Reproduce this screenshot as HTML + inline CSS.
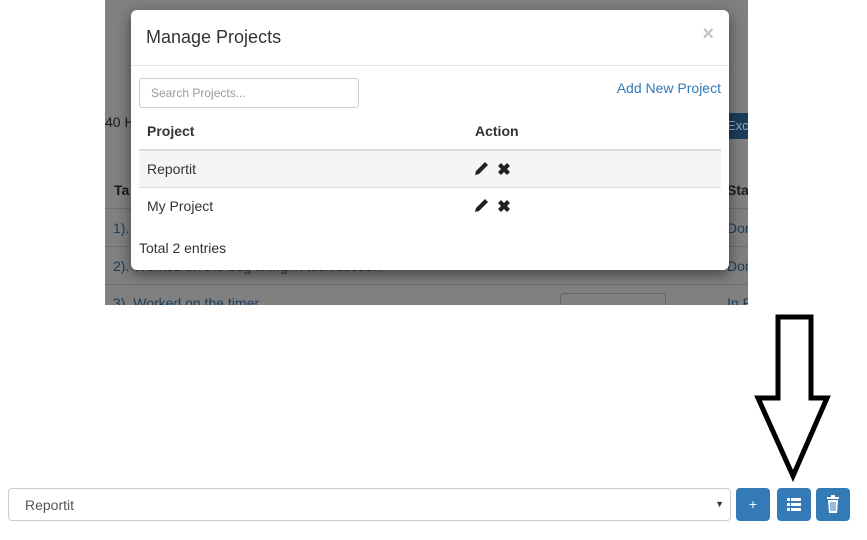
<!DOCTYPE html>
<html><head><style>
body{margin:0;width:867px;height:540px;background:#fff;position:relative;overflow:hidden;font-family:"Liberation Sans",sans-serif;color:#333;font-size:14px}
.bg{position:absolute;left:105px;top:0;width:643px;height:305px;background:#808080;overflow:hidden}
.t{position:absolute;font-size:14px;color:#1a1a1a;white-space:nowrap}
.hl{position:absolute;left:0;width:643px;height:1px;background:#6e6e6e}
.modal{position:absolute;left:131px;top:10px;width:598px;height:260px;background:#fff;border-radius:6px;box-shadow:0 4px 14px rgba(0,0,0,.5)}
.btn{position:absolute;top:488px;width:34px;height:33px;background:#337ab7;border-radius:4px;color:#fff;text-align:center}
</style></head><body>
<div class="bg">
 <div class="t" style="left:0;top:114px;color:#1a1a1a">40 H</div>
 <div style="position:absolute;left:616px;top:113px;width:30px;height:26px;background:#1b3d5c;color:#9ab;font-size:13px;line-height:26px;padding-left:6px">Exce</div>
 <div class="t" style="left:9px;top:182px;font-weight:bold">Ta</div>
 <div class="t" style="left:622px;top:182px;font-weight:bold">Sta</div>
 <div class="hl" style="top:208px"></div>
 <div class="t" style="left:8px;top:220px;color:#1a3d5b">1).</div>
 <div class="t" style="left:622px;top:220px;color:#1a3d5b">Don</div>
 <div class="hl" style="top:246px"></div>
 <div class="t" style="left:8px;top:258px;color:#1a3d5b">2). Worked on the bug fixing in task section</div>
 <div class="t" style="left:622px;top:258px;color:#1a3d5b">Don</div>
 <div class="hl" style="top:284px"></div>
 <div class="t" style="left:8px;top:295px;color:#1a3d5b">3). Worked on the timer</div>
 <div style="position:absolute;left:455px;top:293px;width:104px;height:20px;border:1px solid #666;border-radius:3px;background:#808080"></div>
 <div class="t" style="left:622px;top:295px;color:#1a3d5b">In P</div>
</div>
<div class="modal">
 <div style="position:absolute;left:15px;top:17px;font-size:18px;color:#333">Manage Projects</div>
 <div style="position:absolute;right:15px;top:13px;font-size:20px;color:#c4c4c4;font-weight:bold">×</div>
 <div style="position:absolute;left:0;top:55px;width:598px;height:1px;background:#e5e5e5"></div>
 <div style="position:absolute;left:8px;top:68px;height:28px;border:1px solid #ccc;border-radius:3px;font-size:12px;color:#999;line-height:28px;padding-left:11px;width:207px">Search Projects...</div>
 <div style="position:absolute;right:8px;top:70px;color:#337ab7;font-size:14px">Add New Project</div>
 <div style="position:absolute;left:16px;top:113px;font-weight:bold">Project</div>
 <div style="position:absolute;left:344px;top:113px;font-weight:bold">Action</div>
 <div style="position:absolute;left:8px;top:139px;width:582px;height:2px;background:#ddd"></div>
 <div style="position:absolute;left:8px;top:141px;width:582px;height:36px;background:#f5f5f5;border-bottom:1px solid #ddd"></div>
 <div style="position:absolute;left:16px;top:151px">Reportit</div>
 <div style="position:absolute;left:16px;top:188px">My Project</div>
 <svg style="position:absolute;left:343px;top:150px" width="40" height="60" viewBox="0 0 40 60">
  <g fill="#222"><path d="M1 15 L2 11 L11 2 L14 5 L5 14 Z"/><path d="M27 3 L30 6 L33 3 L36 6 L33 9 L36 12 L33 15 L30 12 L27 15 L24 12 L27 9 L24 6 Z"/>
  <g transform="translate(0,37)"><path d="M1 15 L2 11 L11 2 L14 5 L5 14 Z"/><path d="M27 3 L30 6 L33 3 L36 6 L33 9 L36 12 L33 15 L30 12 L27 15 L24 12 L27 9 L24 6 Z"/></g></g>
 </svg>
 <div style="position:absolute;left:8px;top:230px">Total 2 entries</div>
</div>
<svg style="position:absolute;left:0;top:0" width="867" height="540">
 <path d="M778 317 L811 317 L811 398 L827 398 L793 476 L758 398 L778 398 Z" fill="#fff" stroke="#000" stroke-width="5" stroke-linejoin="miter"/>
</svg>
<div style="position:absolute;left:8px;top:488px;width:721px;height:31px;border:1px solid #ccc;border-radius:4px;background:#fff">
 <div style="position:absolute;left:16px;top:8px;color:#555">Reportit</div>
 <div style="position:absolute;right:6px;top:10px;font-size:9px;color:#333">▼</div>
</div>
<div class="btn" style="left:736px;line-height:33px;font-size:14px">+</div>
<div class="btn" style="left:777px">
 <svg width="34" height="33"><g fill="#fff"><rect x="10" y="10" width="3" height="3"/><rect x="14" y="10" width="10" height="3"/><rect x="10" y="15" width="3" height="3"/><rect x="14" y="15" width="10" height="3"/><rect x="10" y="20" width="3" height="3"/><rect x="14" y="20" width="10" height="3"/></g></svg>
</div>
<div class="btn" style="left:816px">
 <svg width="34" height="33"><g fill="#fff"><rect x="11" y="9" width="12" height="2"/><rect x="15" y="7" width="4" height="2"/><path d="M12 12 H22 L21 25 H13 Z"/></g><g stroke="#337ab7" stroke-width="1"><line x1="15" y1="14" x2="15" y2="23"/><line x1="17" y1="14" x2="17" y2="23"/><line x1="19" y1="14" x2="19" y2="23"/></g></svg>
</div>
</body></html>
